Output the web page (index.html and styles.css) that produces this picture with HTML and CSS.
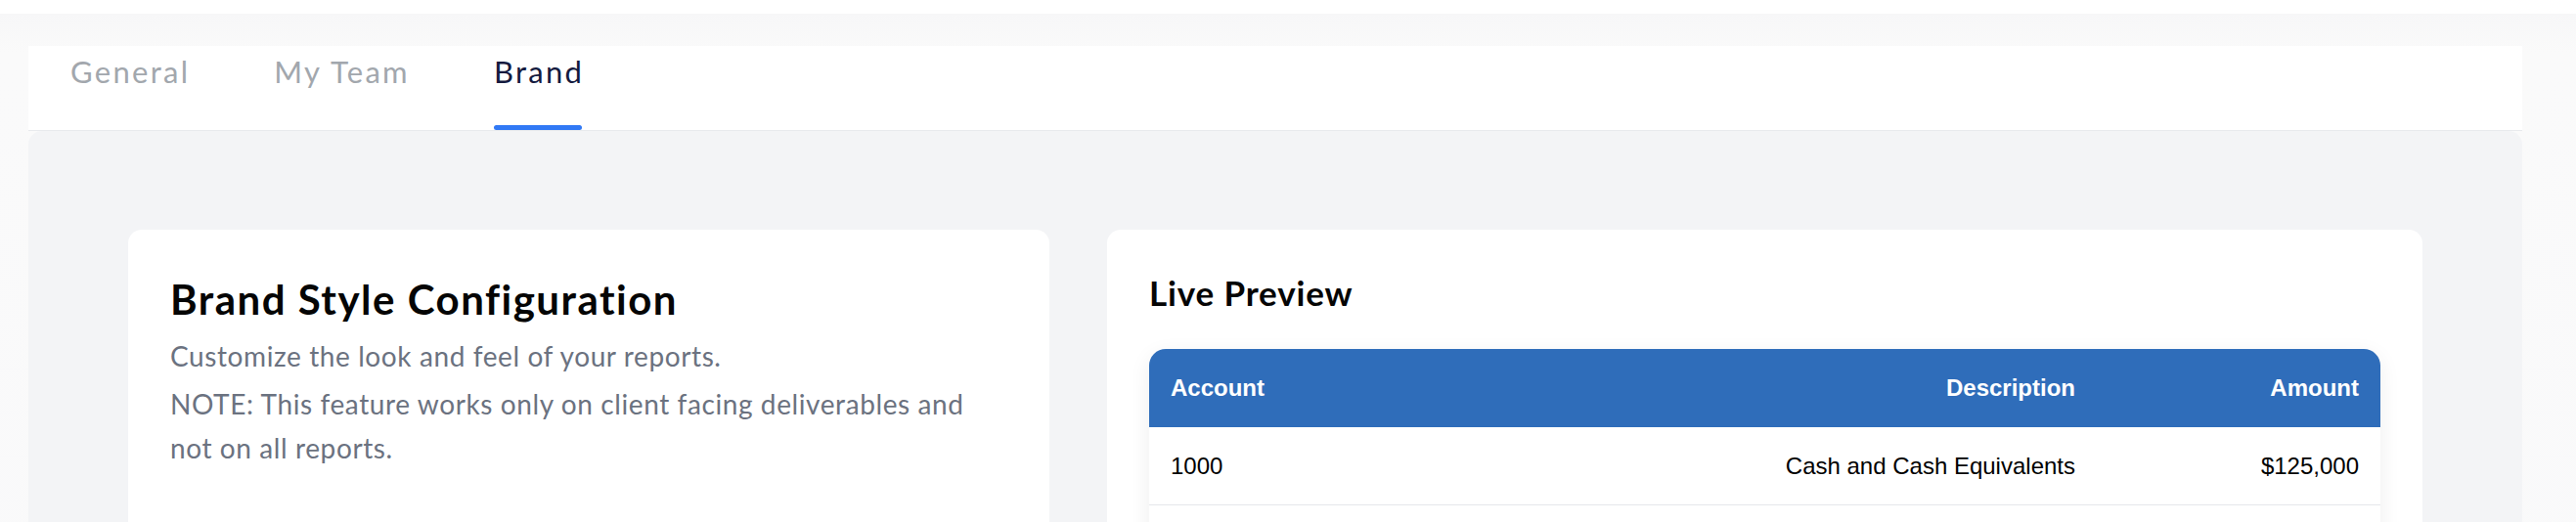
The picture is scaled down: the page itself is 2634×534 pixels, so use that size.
FILE: index.html
```html
<!DOCTYPE html>
<html lang="en">
<head>
<meta charset="utf-8">
<title>Settings – Brand</title>
<link rel="stylesheet" href="styles.css">
</head>
<body>
<div class="page">
  <nav class="tabs">
    <a class="tab">General<span class="tab-bar"></span></a>
    <a class="tab">My Team<span class="tab-bar"></span></a>
    <a class="tab active">Brand<span class="tab-bar"></span></a>
  </nav>
  <main class="panel">
    <section class="card config">
      <h1 class="card-title">Brand Style Configuration</h1>
      <p class="card-text">Customize the look and feel of your reports.</p>
      <p class="card-text">NOTE: This feature works only on client facing deliverables and not on all reports.</p>
    </section>
    <section class="card preview">
      <h2 class="preview-title">Live Preview</h2>
      <div class="table">
        <div class="row head">
          <div class="cell">Account</div>
          <div class="cell right">Description</div>
          <div class="cell right">Amount</div>
        </div>
        <div class="row">
          <div class="cell">1000</div>
          <div class="cell right">Cash and Cash Equivalents</div>
          <div class="cell right">$125,000</div>
        </div>
        <div class="row">
          <div class="cell">1200</div>
          <div class="cell right">Accounts Receivable</div>
          <div class="cell right">$48,250</div>
        </div>
      </div>
    </section>
  </main>
</div>
</body>
</html>
```

FILE: styles.css
```css
* { box-sizing: border-box; }

html, body {
  margin: 0;
  padding: 0;
  background: #ffffff;
  overflow: hidden;
}

body {
  font-family: "Lato", "Open Sans", sans-serif;
  color: #0a0a0a;
}

.page {
  margin-top: 14px;
  background: linear-gradient(#f7f7f8, #fafafa 40px, #f9f9fa);
  padding: 33px 55px 0 29px;
  min-height: 600px;
}

.tabs {
  display: flex;
  gap: 86px;
  height: 87px;
  padding: 0 43px;
  background: #ffffff;
  border-bottom: 1px solid #e8eaed;
}

.tab {
  display: flex;
  flex-direction: column;
  padding-top: 8px;
  font-size: 31px;
  line-height: 36px;
  font-weight: 400;
  color: #a2a7ad;
  letter-spacing: 2.3px;
  white-space: nowrap;
}

.tab-bar {
  display: block;
  margin-top: auto;
  margin-right: 2px;
  height: 5px;
  border-radius: 3px;
  background: transparent;
}

.tab.active { color: #141a3e; }
.tab.active .tab-bar { background: #3179f5; }

.panel {
  display: grid;
  grid-template-columns: 942fr 1345fr;
  gap: 59px;
  align-items: start;
  padding: 101px 102px;
  background: #f3f4f6;
  border-radius: 14px 14px 0 0;
  min-height: 700px;
}

.card {
  background: #ffffff;
  border-radius: 14px;
  padding: 43px;
  min-height: 560px;
}

.card-title {
  margin: 0;
  font-size: 42px;
  line-height: 56px;
  font-weight: 700;
  letter-spacing: 1.5px;
  color: #050505;
}

.card-text {
  margin: 8px 0 0;
  max-width: 830px;
  font-size: 28px;
  line-height: 45px;
  letter-spacing: 0.6px;
  color: #6b7280;
}

.card-text + .card-text { margin-top: 4px; }

.preview-title {
  margin: 0;
  font-size: 35px;
  line-height: 42px;
  font-weight: 700;
  letter-spacing: 0.85px;
  color: #050505;
}

.table {
  margin-top: 37px;
  border-radius: 17px 17px 0 0;
  overflow: hidden;
  box-shadow: 0 6px 22px rgba(0, 0, 0, 0.07);
  font-family: "Liberation Sans", Arial, sans-serif;
  font-size: 24px;
}

.row {
  display: grid;
  grid-template-columns: 1fr auto 290px;
  height: 80px;
  align-items: center;
  background: #ffffff;
  border-bottom: 1px solid #e5e7eb;
  color: #000000;
}

.row.head {
  background: #2f6dba;
  color: #ffffff;
  font-weight: 700;
  border-bottom: 0;
}

.cell {
  padding: 0 22px;
  white-space: nowrap;
}
.cell.right { text-align: right; }
```
